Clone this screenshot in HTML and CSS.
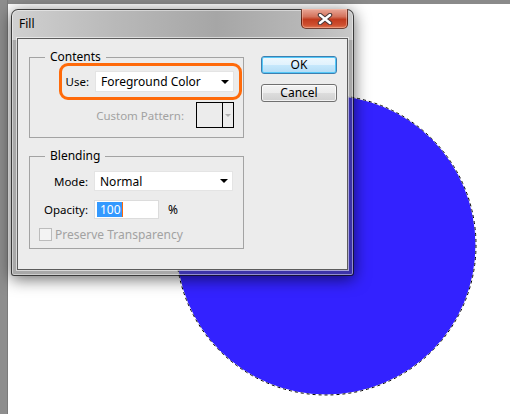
FILE: index.html
```html
<!DOCTYPE html>
<html lang="en">

<head>
    <meta charset="UTF-8" />
    <title>Fill</title>
    <link rel="stylesheet" href="styles.css">
</head>

<body>
    <div class="app">
        <div class="side"></div>
        <div class="main">
            <div class="topbar"></div>
            <div class="canvas">
                <!-- circular selection filled with foreground colour -->
                <svg class="selection" width="304" height="304" viewBox="0 0 304 304">
                    <circle cx="152" cy="152" r="150" fill="#3322ff" />
                    <circle cx="152" cy="152" r="150" fill="none" stroke="#fff" stroke-width="1" />
                    <circle cx="152" cy="152" r="150" fill="none" stroke="#000" stroke-width="1" stroke-dasharray="3 3" />
                </svg>

                <div class="dialog">
                    <div class="titlebar">
                        <span class="title">Fill</span>
                        <button class="close" type="button">
                            <svg width="16" height="12" viewBox="0 0 16 12">
                                <path d="M3 2 L13 10 M13 2 L3 10" stroke="#4a3a3a" stroke-width="4.5" stroke-linecap="round" />
                                <path d="M3 2 L13 10 M13 2 L3 10" stroke="#fff" stroke-width="2.4" stroke-linecap="round" />
                            </svg>
                        </button>
                    </div>

                    <div class="client">
                        <div class="groups">
                            <fieldset class="group">
                                <legend>Contents</legend>
                                <div class="row use-row">
                                    <div class="highlight"></div>
                                    <span class="label">Use:</span>
                                    <div class="select"><span>Foreground Color</span><i class="arrow"></i></div>
                                </div>
                                <div class="row pattern-row">
                                    <span class="label disabled">Custom Pattern:</span>
                                    <div class="pattern"><span class="swatch"></span><span class="pick"><i class="arrow small"></i></span></div>
                                </div>
                            </fieldset>

                            <fieldset class="group blending">
                                <legend>Blending</legend>
                                <div class="grid">
                                    <span class="label">Mode:</span>
                                    <div class="select mode"><span>Normal</span><i class="arrow"></i></div>

                                    <span class="label">Opacity:</span>
                                    <div class="opacity">
                                        <div class="field"><span class="sel">100</span><span class="caret"></span></div>
                                        <span class="unit">%</span>
                                    </div>
                                </div>
                                <div class="check-row">
                                    <span class="check"></span>
                                    <span class="disabled">Preserve Transparency</span>
                                </div>
                            </fieldset>
                        </div>

                        <div class="buttons">
                            <button class="btn default" type="button">OK</button>
                            <button class="btn" type="button">Cancel</button>
                        </div>
                    </div>
                </div>
            </div>
        </div>
    </div>
</body>

</html>
```

FILE: styles.css
```css
body {
    margin: 0;
    font-family: "Noto Sans", sans-serif;
    font-size: 11.5px;
    color: #000;
    background: #8c8c8c;
}

.app {
    display: flex;
    width: 510px;
    height: 414px;
    overflow: hidden;
}

.side {
    width: 7px;
    background: #8e8e8e;
    border-right: 1px solid #7b7b7b;
}

.main {
    flex: 1;
    display: flex;
    flex-direction: column;
}

.topbar {
    height: 4px;
    background: #8a8a8a;
}

.canvas {
    flex: 1;
    position: relative;
    background: #fff;
}

.selection {
    position: absolute;
    left: 166px;
    top: 89px;
}

/* Dialog window */
.dialog {
    position: absolute;
    left: 3px;
    top: 5px;
    width: 341px;
    height: 265px;
    border: 1px solid rgba(0, 0, 0, 0.65);
    border-radius: 7px 7px 3px 3px;
    background:
        linear-gradient(to right, #d0d0d0 0%, #b9b9b9 30%, #a6a6a6 60%, #b7b7b7 85%, #c8c8c8 100%) top / 100% 30px no-repeat,
        rgba(70, 70, 70, 0.47);
    box-shadow: 0 3px 16px rgba(0, 0, 0, 0.6), inset 0 0 0 1px rgba(255, 255, 255, 0.45);
    display: flex;
    flex-direction: column;
}

.titlebar {
    height: 28px;
    display: flex;
    justify-content: space-between;
    align-items: flex-start;
}

.title {
    margin-left: 7px;
    line-height: 28px;
    font-size: 12px;
}

.close {
    margin: -1px 5px 0 0;
    width: 47px;
    height: 20px;
    padding: 0;
    border: 1px solid rgba(60, 20, 10, 0.7);
    border-top: none;
    border-radius: 0 0 5px 5px;
    background: linear-gradient(#e9a898 0%, #d4735c 40%, #c13b1e 55%, #cf5030 85%, #de7a55 100%);
    box-shadow: inset 0 0 0 1px rgba(255, 200, 180, 0.45);
    display: flex;
    align-items: center;
    justify-content: center;
}

.client {
    flex: 1;
    margin: 0 5px 5px;
    background: #ececec;
    border: 1px solid #5c5c5c;
    box-shadow: 0 0 0 1px rgba(255, 255, 255, 0.55);
    display: flex;
    padding: 10px 0 0 11px;
}

.groups {
    width: 215px;
}

/* Group boxes */
.group {
    margin: 0;
    padding: 0 0 9px;
    min-width: 0;
    border: 1px solid #a3a3a3;
}

.group legend {
    margin-left: 15px;
    padding: 0 5px;
    line-height: 16px;
    font-size: 12px;
}

.blending {
    margin-top: 10px;
    padding-bottom: 6px;
}

.row {
    display: flex;
    justify-content: flex-end;
    align-items: center;
    padding-right: 9px;
}

.use-row {
    position: relative;
    margin-top: 6px;
    gap: 6px;
}

.pattern-row {
    margin-top: 10px;
    gap: 12px;
}

.highlight {
    position: absolute;
    left: 29px;
    right: 1px;
    top: -8px;
    bottom: -8px;
    border: 3px solid #ff6a0a;
    border-radius: 9px;
    pointer-events: none;
}

.disabled {
    color: #a2a2a2;
}

.select {
    width: 139px;
    height: 21px;
    box-sizing: border-box;
    background: #fff;
    border: 1px solid #e4e4e4;
    display: flex;
    align-items: center;
    justify-content: space-between;
    padding: 0 4px 0 5px;
    font-size: 12px;
}

.select.mode {
    height: 20px;
}

.arrow {
    width: 0;
    height: 0;
    border-left: 4px solid transparent;
    border-right: 4px solid transparent;
    border-top: 4px solid #000;
}

.arrow.small {
    border-left-width: 3px;
    border-right-width: 3px;
    border-top: 3px solid #b0b0b0;
}

.pattern {
    width: 38px;
    height: 26px;
    box-sizing: border-box;
    border: 1px solid #000;
    display: flex;
}

.swatch {
    width: 25px;
    border-right: 1px solid #000;
}

.pick {
    flex: 1;
    display: flex;
    align-items: center;
    justify-content: center;
}

.grid {
    display: grid;
    grid-template-columns: 58px 139px;
    column-gap: 6px;
    row-gap: 9px;
    align-items: center;
    margin-top: 7px;
}

.grid .label {
    text-align: right;
}

.opacity {
    display: flex;
    align-items: center;
    gap: 9px;
}

.field {
    width: 65px;
    height: 19px;
    box-sizing: border-box;
    background: #fff;
    border: 1px solid #dcdcdc;
    display: flex;
    align-items: center;
    padding-left: 2px;
    font-size: 12px;
}

.sel {
    background: #3399ff;
    color: #fff;
    padding: 0 1px 0 3px;
    line-height: 15px;
}

.caret {
    width: 1px;
    height: 15px;
    background: #ff6a0a;
}

.unit {
    font-size: 12px;
}

.check-row {
    display: flex;
    align-items: center;
    gap: 3px;
    margin-top: 8px;
    padding-left: 9px;
    line-height: 15px;
    font-size: 12px;
}

.check {
    width: 11px;
    height: 11px;
    border: 1px solid #bcbcbc;
    background: #f3f3f3;
}

/* Buttons */
.buttons {
    margin: 7px 0 0 17px;
    display: flex;
    flex-direction: column;
    gap: 10px;
}

.btn {
    width: 76px;
    height: 18px;
    padding: 0;
    font-family: inherit;
    font-size: 12px;
    line-height: 14px;
    color: #000;
    border: 1px solid #707070;
    border-radius: 3px;
    background: linear-gradient(#f3f3f3 0%, #ebebeb 50%, #dddddd 51%, #d0d0d0 100%);
    box-shadow: inset 0 0 0 1px rgba(255, 255, 255, 0.7);
}

.btn.default {
    border-color: #3c7fb1;
    background: linear-gradient(#eef8fe 0%, #e0f2fd 50%, #c6e8fc 51%, #b3dcf5 100%);
    box-shadow: inset 0 0 0 1px #54c8f8;
}
```
